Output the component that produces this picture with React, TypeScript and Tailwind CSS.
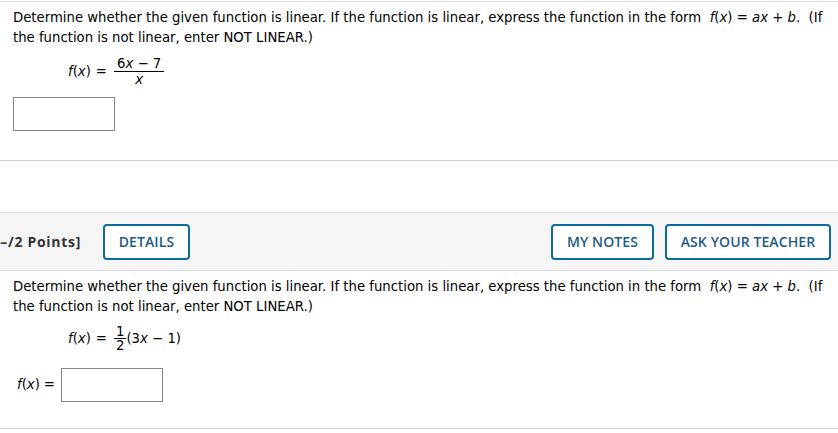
import React from "react";

const F = () => (
  <span className="whitespace-nowrap">
    <i>f</i>(<i>x</i>)
  </span>
);

const Prompt = () => (
  <p className="leading-[20px]">
    Determine whether the given function is linear. If the function is linear, express the function in the form&nbsp;{" "}
    <F /> = <i>ax</i> + <i>b</i>.&nbsp; (If the function is not linear, enter NOT LINEAR.)
  </p>
);

const Btn = ({ children, w }: { children: React.ReactNode; w: string }) => (
  <button
    className={`${w} h-[36px] shrink-0 rounded-[4px] border-2 border-[#0b6a9e] bg-white text-[14px] font-semibold text-[#1d5b86] tracking-[0.1px]`}
    style={{ fontFamily: '"Open Sans", sans-serif' }}
  >
    {children}
  </button>
);

export default function App() {
  return (
    <div
      className="w-[838px] h-[433px] bg-white overflow-hidden text-[13.25px] text-black"
      style={{ fontFamily: '"DejaVu Sans", Verdana, sans-serif' }}
    >
      {/* question 1 */}
      <div className="mt-px border-t border-[#e3e3e3] pl-[13px] pr-3 pt-[6px] h-[159px]">
        <Prompt />
        <div className="flex items-center gap-[5px] pl-[55px] mt-[7px] h-[34px]">
          <F />
          <span className="mr-[2px]">=</span>
          <span className="inline-flex flex-col items-center">
            <span className="px-[3px] border-b border-black leading-[14px]">
              6<i>x</i> − 7
            </span>
            <span className="leading-[16px]">
              <i>x</i>
            </span>
          </span>
        </div>
        <div className="mt-[8px] w-[102px] h-[34px] border border-[#888] bg-white" />
      </div>

      <div className="border-t border-[#cfcfcf] h-[52px]" />

      {/* toolbar */}
      <div className="flex items-center h-[59px] border-y border-[#dcdcdc] bg-[#f5f5f5] pr-[7px]">
        <div className="w-[81px] shrink-0 flex justify-end mr-[22px]">
          <span
            className="whitespace-nowrap text-[14px] font-bold text-[#333] tracking-[0.7px]"
            style={{ fontFamily: '"Open Sans", sans-serif' }}
          >
            –/2 Points]
          </span>
        </div>
        <Btn w="w-[87px]">DETAILS</Btn>
        <div className="flex-1" />
        <Btn w="w-[103px]">MY NOTES</Btn>
        <div className="w-[11px] shrink-0" />
        <Btn w="w-[166px]">ASK YOUR TEACHER</Btn>
      </div>

      {/* question 2 */}
      <div className="pl-[13px] pr-3 pt-[6px] h-[158px] border-b border-[#cfcfcf]">
        <Prompt />
        <div className="flex items-center gap-[5px] pl-[55px] mt-[7px] h-[30px]">
          <F />
          <span className="mr-[2px]">=</span>
          <span className="flex items-center">
            <span className="inline-flex flex-col items-center">
              <span className="px-[2px] border-b border-black leading-[13px]">1</span>
              <span className="leading-[14px]">2</span>
            </span>
            <span>
              (3<i>x</i> − 1)
            </span>
          </span>
        </div>
        <div className="flex items-center pl-[4px] mt-[14px]">
          <F />
          <span className="ml-[4px] mr-[6px]">=</span>
          <div className="w-[102px] h-[34px] border border-[#888] bg-white" />
        </div>
      </div>
    </div>
  );
}
